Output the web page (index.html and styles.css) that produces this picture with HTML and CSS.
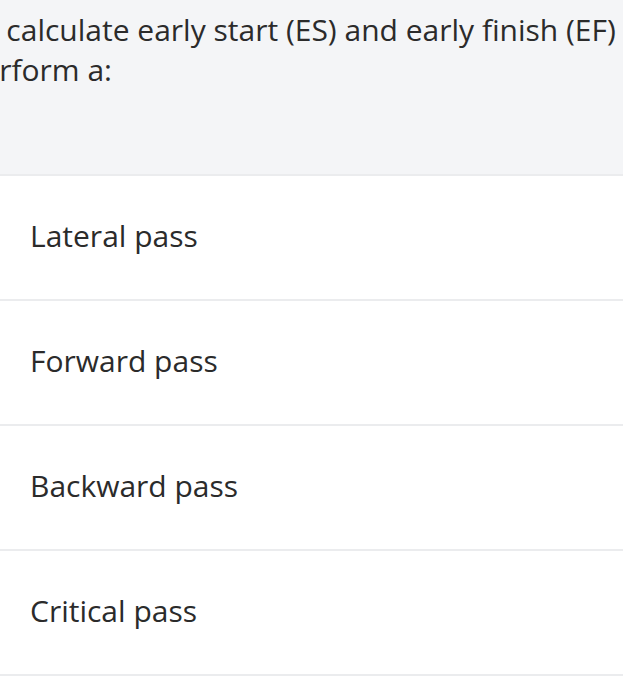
FILE: index.html
```html
<!DOCTYPE html>
<html>
<head>
<meta charset="utf-8">
<link rel="stylesheet" href="styles.css">
</head>
<body>
<div class="question">
  <p class="question-text">To calculate early start (ES) and early finish (EF)<br>perform a:</p>
</div>
<ul class="options">
  <li class="option">Lateral pass</li>
  <li class="option">Forward pass</li>
  <li class="option">Backward pass</li>
  <li class="option">Critical pass</li>
</ul>
</body>
</html>
```

FILE: styles.css
```css
html, body {
  margin: 0;
  padding: 0;
  background: #ffffff;
}
body {
  font-family: "Open Sans", "Liberation Sans", sans-serif;
  color: #2b2b2b;
  overflow: hidden;
}
.question {
  background: #f4f5f7;
  height: 174px;
  overflow: hidden;
  border-bottom: 2px solid #ebecee;
}
.question-text {
  margin: 0 0 0 -36px;
  padding-top: 10px;
  font-size: 30px;
  line-height: 40px;
  white-space: nowrap;
}
.options {
  list-style: none;
  margin: 0;
  padding: 0;
}
.option {
  height: 119px;
  box-sizing: content-box;
  border-bottom: 2px solid #ebecee;
  display: flex;
  align-items: center;
  padding-left: 30px;
  padding-bottom: 4px;
  font-size: 30px;
  line-height: 40px;
}
```
